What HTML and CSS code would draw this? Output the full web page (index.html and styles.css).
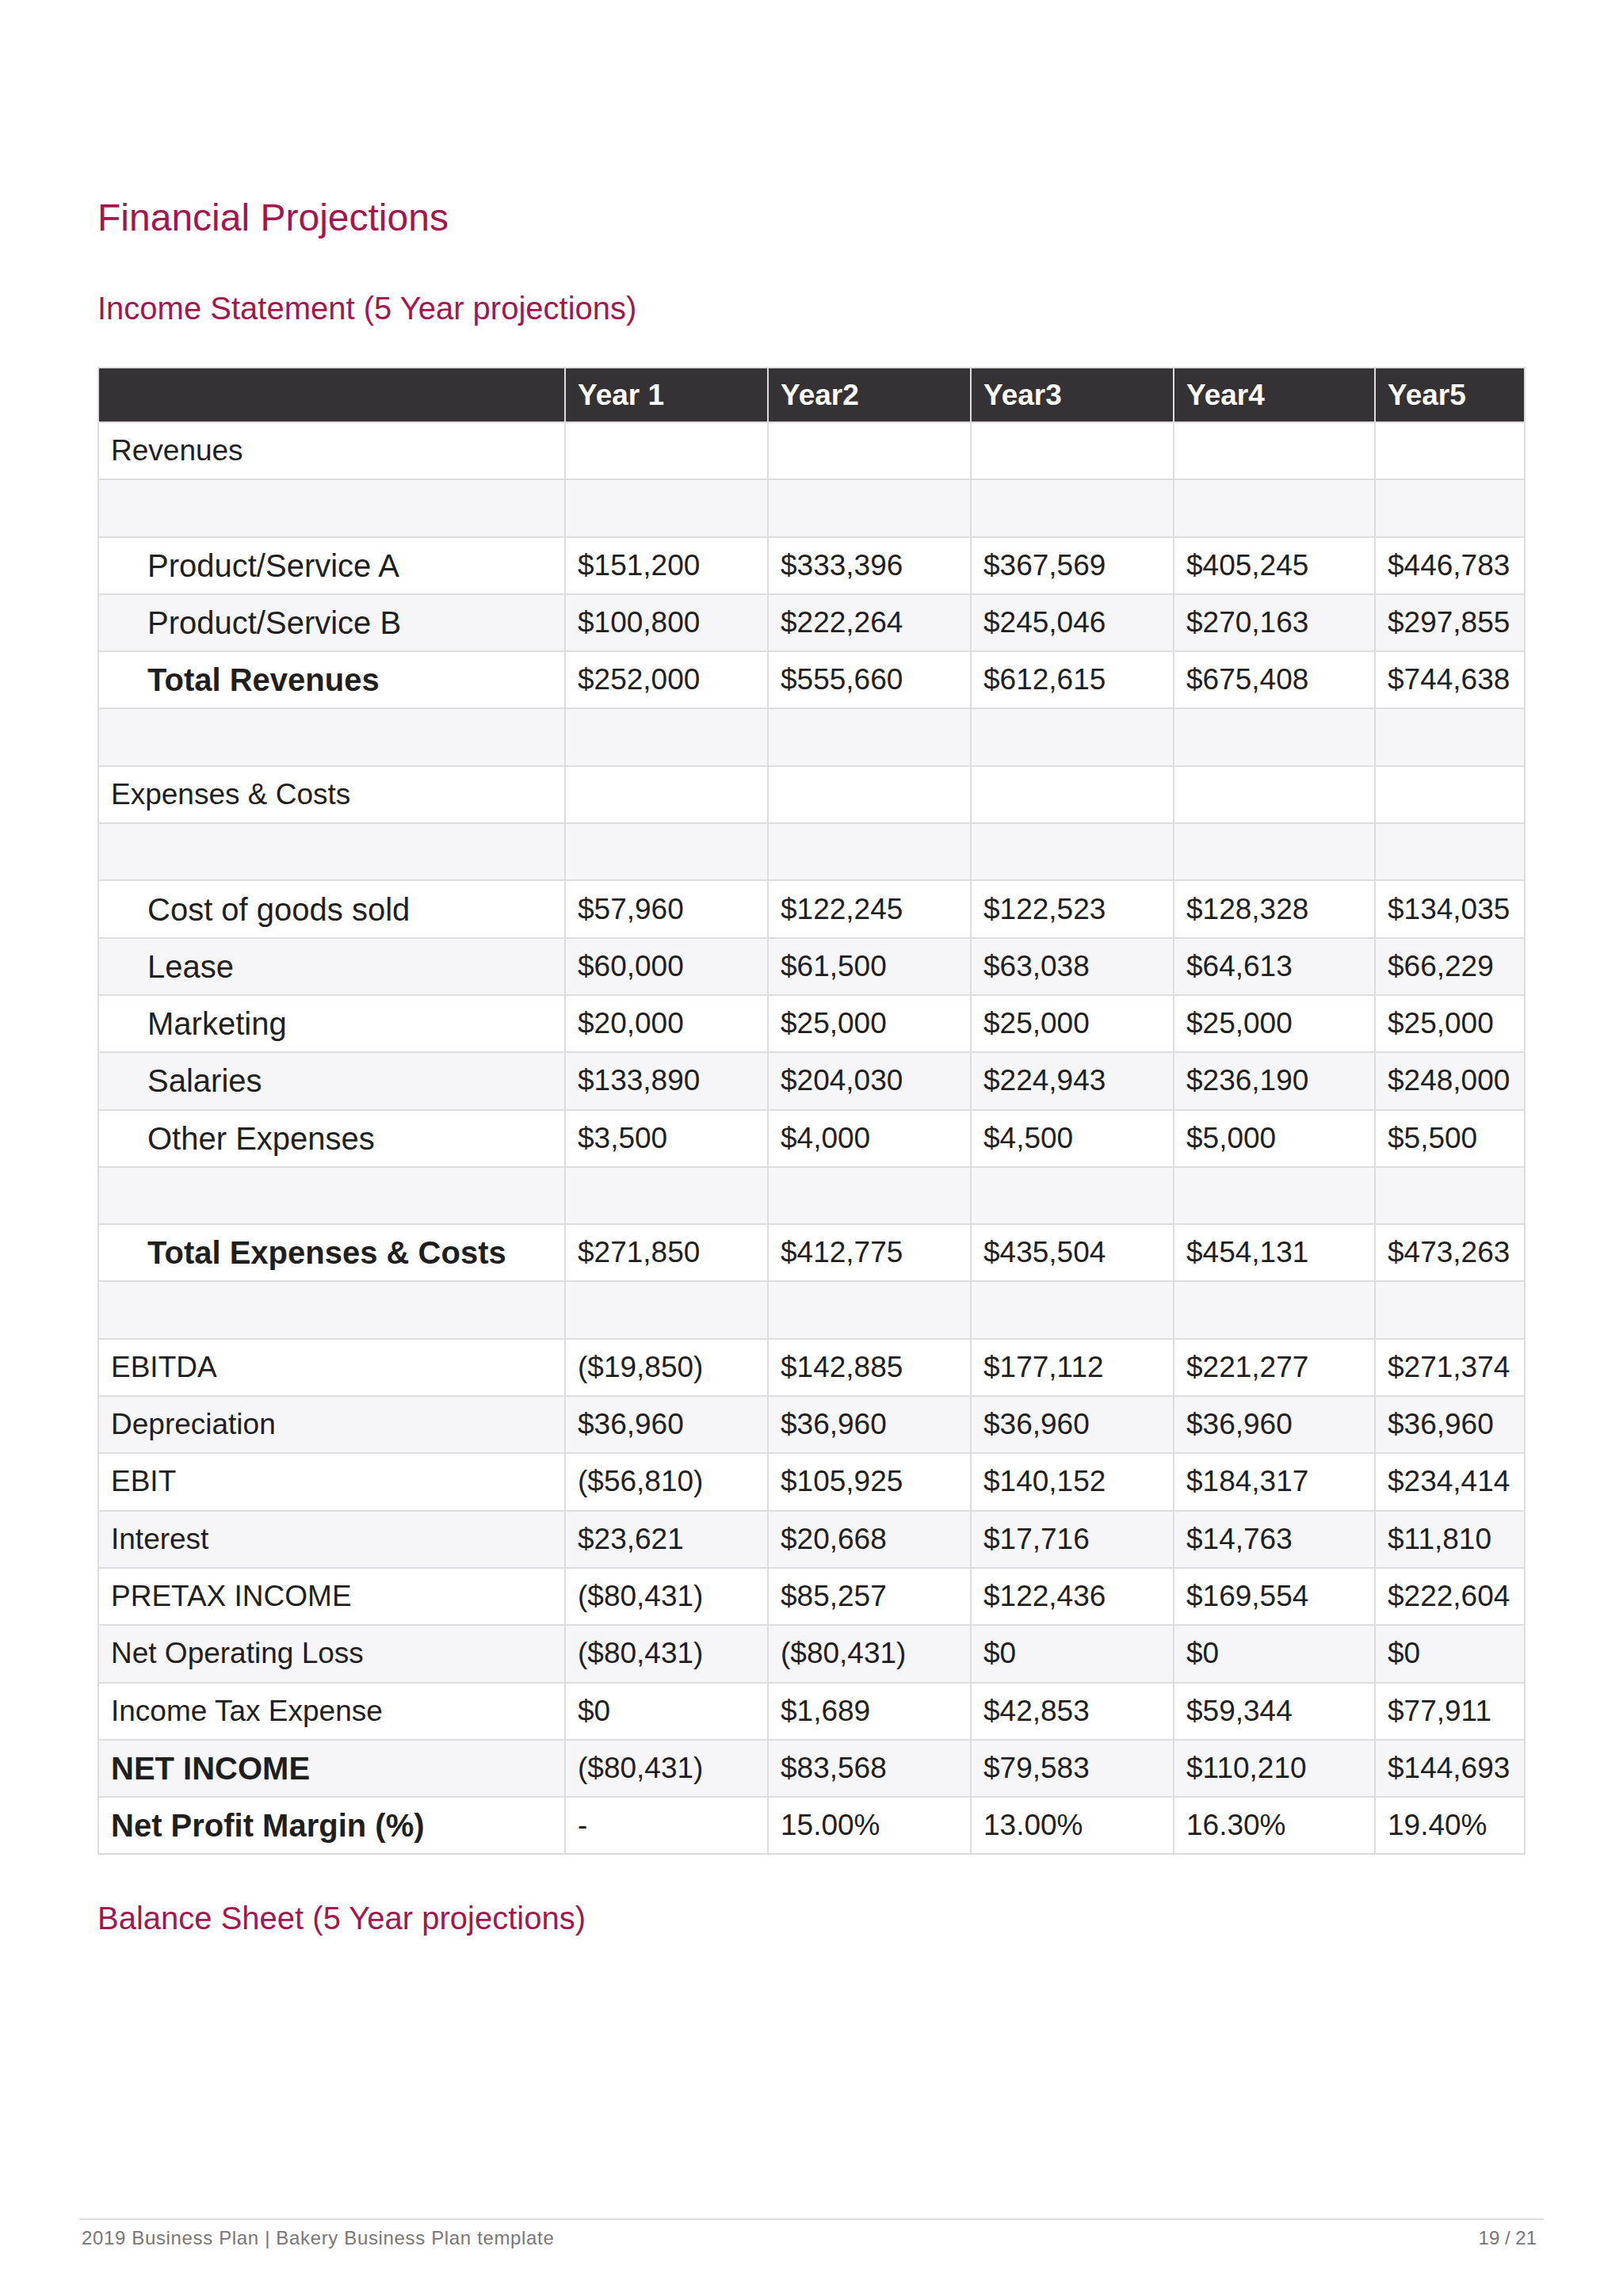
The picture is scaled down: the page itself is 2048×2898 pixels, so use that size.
FILE: index.html
```html
<!DOCTYPE html>
<html lang="en">
<head>
<meta charset="utf-8">
<title>Financial Projections</title>
<link rel="stylesheet" href="styles.css">
</head>
<body>
<div class="page">
  <main class="content">
    <h1 class="title">Financial Projections</h1>
    <h2 class="subtitle">Income Statement (5 Year projections)</h2>
    <table class="fin">
      <colgroup>
        <col class="c-label"><col class="c-year"><col class="c-year"><col class="c-year"><col class="c-year4"><col class="c-year5">
      </colgroup>
      <thead>
        <tr><th></th><th>Year 1</th><th>Year2</th><th>Year3</th><th>Year4</th><th>Year5</th></tr>
      </thead>
      <tbody>
        <tr><td>Revenues</td><td></td><td></td><td></td><td></td><td></td></tr>
        <tr><td></td><td></td><td></td><td></td><td></td><td></td></tr>
        <tr><td class="sub">Product/Service A</td><td>$151,200</td><td>$333,396</td><td>$367,569</td><td>$405,245</td><td>$446,783</td></tr>
        <tr><td class="sub">Product/Service B</td><td>$100,800</td><td>$222,264</td><td>$245,046</td><td>$270,163</td><td>$297,855</td></tr>
        <tr><td class="sub strong">Total Revenues</td><td>$252,000</td><td>$555,660</td><td>$612,615</td><td>$675,408</td><td>$744,638</td></tr>
        <tr><td></td><td></td><td></td><td></td><td></td><td></td></tr>
        <tr><td>Expenses &amp; Costs</td><td></td><td></td><td></td><td></td><td></td></tr>
        <tr><td></td><td></td><td></td><td></td><td></td><td></td></tr>
        <tr><td class="sub">Cost of goods sold</td><td>$57,960</td><td>$122,245</td><td>$122,523</td><td>$128,328</td><td>$134,035</td></tr>
        <tr><td class="sub">Lease</td><td>$60,000</td><td>$61,500</td><td>$63,038</td><td>$64,613</td><td>$66,229</td></tr>
        <tr><td class="sub">Marketing</td><td>$20,000</td><td>$25,000</td><td>$25,000</td><td>$25,000</td><td>$25,000</td></tr>
        <tr><td class="sub">Salaries</td><td>$133,890</td><td>$204,030</td><td>$224,943</td><td>$236,190</td><td>$248,000</td></tr>
        <tr><td class="sub">Other Expenses</td><td>$3,500</td><td>$4,000</td><td>$4,500</td><td>$5,000</td><td>$5,500</td></tr>
        <tr><td></td><td></td><td></td><td></td><td></td><td></td></tr>
        <tr><td class="sub strong">Total Expenses &amp; Costs</td><td>$271,850</td><td>$412,775</td><td>$435,504</td><td>$454,131</td><td>$473,263</td></tr>
        <tr><td></td><td></td><td></td><td></td><td></td><td></td></tr>
        <tr><td>EBITDA</td><td>($19,850)</td><td>$142,885</td><td>$177,112</td><td>$221,277</td><td>$271,374</td></tr>
        <tr><td>Depreciation</td><td>$36,960</td><td>$36,960</td><td>$36,960</td><td>$36,960</td><td>$36,960</td></tr>
        <tr><td>EBIT</td><td>($56,810)</td><td>$105,925</td><td>$140,152</td><td>$184,317</td><td>$234,414</td></tr>
        <tr><td>Interest</td><td>$23,621</td><td>$20,668</td><td>$17,716</td><td>$14,763</td><td>$11,810</td></tr>
        <tr><td>PRETAX INCOME</td><td>($80,431)</td><td>$85,257</td><td>$122,436</td><td>$169,554</td><td>$222,604</td></tr>
        <tr><td>Net Operating Loss</td><td>($80,431)</td><td>($80,431)</td><td>$0</td><td>$0</td><td>$0</td></tr>
        <tr><td>Income Tax Expense</td><td>$0</td><td>$1,689</td><td>$42,853</td><td>$59,344</td><td>$77,911</td></tr>
        <tr><td class="strong">NET INCOME</td><td>($80,431)</td><td>$83,568</td><td>$79,583</td><td>$110,210</td><td>$144,693</td></tr>
        <tr><td class="strong">Net Profit Margin (%)</td><td>-</td><td>15.00%</td><td>13.00%</td><td>16.30%</td><td>19.40%</td></tr>
      </tbody>
    </table>
    <h2 class="subtitle after-table">Balance Sheet (5 Year projections)</h2>
  </main>
  <footer class="footer">
    <span class="footer-doc">2019 Business Plan | Bakery Business Plan template</span>
    <span class="footer-page">19 / 21</span>
  </footer>
</div>
</body>
</html>
```
FILE: styles.css
```css
html, body {
  margin: 0;
  padding: 0;
  background: #ffffff;
}

body {
  font-family: "Liberation Sans", Arial, Helvetica, sans-serif;
  color: #1f1f1f;
}

.page {
  width: 2048px;
  min-height: 2898px;
  box-sizing: border-box;
  display: flex;
  flex-direction: column;
  padding-top: 247px;
}

.content {
  padding: 0 125px 0 123px;
}

.title {
  margin: 0;
  font-size: 48px;
  line-height: 56px;
  font-weight: normal;
  color: #a3174f;
}

.subtitle {
  margin: 62px 0 0;
  font-size: 40px;
  line-height: 48px;
  font-weight: normal;
  color: #a3174f;
}

.subtitle.after-table {
  margin-top: 56px;
}

.fin {
  margin-top: 50px;
  width: 1800px;
  border-collapse: collapse;
  table-layout: fixed;
}

.c-label { width: 589px; }
.c-year { width: 256px; }
.c-year4 { width: 254px; }
.c-year5 { width: 189px; }

.fin th,
.fin td {
  border: 2px solid #dddcdf;
  padding: 0 0 0 15px;
  text-align: left;
  vertical-align: middle;
  font-size: 37px;
  line-height: 44px;
  white-space: nowrap;
}

.fin thead tr {
  height: 69px;
}

.fin th {
  background: #343235;
  color: #ffffff;
  font-weight: bold;
}

.fin tbody tr {
  height: 72.3px;
}

.fin tbody tr:nth-child(even) {
  background: #f6f5f8;
}

.fin td.sub {
  padding-left: 61px;
  font-size: 40px;
}

.fin td.strong {
  font-weight: bold;
  font-size: 40px;
}

.footer {
  margin: auto 100px 0;
  border-top: 2px solid #dddcdf;
  display: flex;
  justify-content: space-between;
  padding: 9px 9px 59px 3px;
  font-size: 24px;
  line-height: 28px;
  color: #777777;
}

.footer-doc {
  letter-spacing: 0.65px;
}
```
